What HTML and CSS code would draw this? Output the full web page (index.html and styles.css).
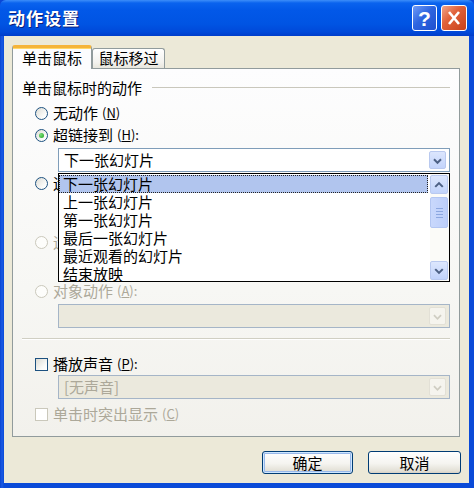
FILE: index.html
```html
<!DOCTYPE html>
<html lang="zh-CN">
<head>
    <meta charset="utf-8">
    <title>动作设置</title>
    <link rel="stylesheet" href="styles.css">
</head>
<body>
<div class="window">
    <div class="titlebar">
        <span class="title">动作设置</span>
        <div class="caption">
            <div class="cap help">?</div>
            <div class="cap close">
                <svg width="24" height="24" viewBox="0 0 24 24"><path d="M7 6 L17 18 M17 6 L7 18" stroke="#fff" stroke-width="2.6" fill="none"/></svg>
            </div>
        </div>
    </div>

    <div class="client">
        <div class="tabs">
            <div class="tab active">单击鼠标</div>
            <div class="tab">鼠标移过</div>
        </div>

        <div class="panel">
            <div class="group">
                <div class="group-head"><span>单击鼠标时的动作</span><i></i></div>

                <div class="opt row1"><span class="radio"></span>无动作<span class="key">(<u>N</u>)</span></div>
                <div class="opt"><span class="radio on"></span>超链接到<span class="key">(<u>H</u>):</span></div>
                <div class="combo">
                    <span class="value">下一张幻灯片</span>
                    <span class="drop"><svg width="17" height="18" viewBox="0 0 17 18"><path d="M4.5 7 L8.5 11 L12.5 7" stroke="#4d6185" stroke-width="2.2" fill="none"/></svg></span>
                </div>
                <!-- these two rows sit under the open list, only a sliver shows -->
                <div class="opt"><span class="radio"></span><span class="under">运行程序 (R):</span></div>
                <div class="field"></div>
                <div class="opt off gap"><span class="radio"></span><span class="under">运行宏 (M):</span></div>
                <div class="combo off small"><span class="value"></span></div>
                <div class="opt off"><span class="radio"></span>对象动作<span class="key">(<u>A</u>):</span></div>
                <div class="combo off">
                    <span class="value"></span>
                    <span class="drop"><svg width="17" height="18" viewBox="0 0 17 18"><path d="M4.5 7 L8.5 11 L12.5 7" stroke="#cfcdc2" stroke-width="2" fill="none"/></svg></span>
                </div>

                <div class="sep"></div>

                <div class="opt check-row"><span class="check"></span>播放声音<span class="key">(<u>P</u>):</span></div>
                <div class="combo off tight">
                    <span class="value">[无声音]</span>
                    <span class="drop"><svg width="17" height="18" viewBox="0 0 17 18"><path d="M4.5 7 L8.5 11 L12.5 7" stroke="#cfcdc2" stroke-width="2" fill="none"/></svg></span>
                </div>
                <div class="opt off last"><span class="check"></span>单击时突出显示<span class="key">(<u>C</u>)</span></div>

                <!-- open dropdown of the hyperlink combo -->
                <div class="droplist">
                    <ul class="items">
                        <li class="sel">下一张幻灯片</li>
                        <li>上一张幻灯片</li>
                        <li>第一张幻灯片</li>
                        <li>最后一张幻灯片</li>
                        <li>最近观看的幻灯片</li>
                        <li>结束放映</li>
                    </ul>
                    <div class="vscroll">
                        <div class="sbtn"><svg width="17" height="18" viewBox="0 0 17 18"><path d="M4.5 11 L8.5 7 L12.5 11" stroke="#4d6185" stroke-width="2.2" fill="none"/></svg></div>
                        <div class="thumb"><span></span><span></span><span></span><span></span></div>
                        <div class="track"></div>
                        <div class="sbtn"><svg width="17" height="18" viewBox="0 0 17 18"><path d="M4.5 7 L8.5 11 L12.5 7" stroke="#4d6185" stroke-width="2.2" fill="none"/></svg></div>
                    </div>
                </div>
            </div>
        </div>

        <div class="actions">
            <button class="btn default">确定</button>
            <button class="btn">取消</button>
        </div>
    </div>
</div>
</body>
</html>
```

FILE: styles.css
```css
* { box-sizing: border-box; }
body { margin: 0; width: 474px; height: 488px; overflow: hidden; background: #0a47d6; font-family: "Noto Sans CJK SC", "Noto Sans", sans-serif; font-size: 15px; color: #000; }

.window { width: 474px; height: 488px; display: flex; flex-direction: column; background: linear-gradient(to right, #0a44d0 0, #1a5ae4 2px, #0a4ad8 4px); border-radius: 6px 6px 0 0; }
.titlebar { height: 36px; display: flex; align-items: center; justify-content: space-between; padding: 0 7px 0 8px; border-radius: 6px 6px 0 0;
    background: linear-gradient(to bottom, #3d8ef9 0, #0a63ee 3px, #0258e8 10px, #0054e3 24px, #0049d9 32px, #003dca 36px); }
.title { color: #fff; font-weight: bold; font-size: 17px; line-height: 20px; text-shadow: 1px 1px 0 #0a1f7a; letter-spacing: 1px; }
.caption { display: flex; gap: 4px; }
.cap { width: 25px; height: 26px; border: 1px solid #fff; border-radius: 3px; display: flex; align-items: center; justify-content: center; color: #fff; }
.help { background: linear-gradient(135deg, #6f9cf8 0, #2e65e0 45%, #1f50cf 100%); font-family: "Liberation Sans", sans-serif; font-weight: bold; font-size: 21px; line-height: 1; }
.close { width: 26px; background: linear-gradient(135deg, #f0a58a 0, #e1623a 40%, #c7401b 100%); }

.client { flex: 1; margin: 0 5px 5px 4px; background: #ece9d8; padding-top: 9px; }

.tabs { display: flex; align-items: flex-end; height: 23px; margin-left: 8px; position: relative; z-index: 2; }
.tab { height: 20px; width: 73px; border: 1px solid #919b9c; border-bottom: none; border-radius: 3px 3px 0 0; font-size: 15px; line-height: 18px; text-align: center;
    background: linear-gradient(#ffffff, #f3f2ee 70%, #e8e6dd); }
.tab.active { height: 24px; width: 80px; margin-bottom: -1px; background: #fcfcfe; border-top: 3px solid #f5b43a; line-height: 20px; box-shadow: inset 0 1px 0 #ffd86a; }

.panel { height: 369px; width: 448px; margin-left: 8px; border: 1px solid #919b9c; background: linear-gradient(#fdfdfe, #f7f7f4 60%, #f2f1ec); }

.group { position: relative; padding: 10px 9px 0 9px; }
.group-head { display: flex; align-items: center; gap: 10px; height: 18px; line-height: 18px; }
.group-head i { flex: 1; border-top: 1px solid #c9c7bc; margin-top: -1px; }

.opt { display: flex; align-items: center; height: 22px; padding-left: 13px; line-height: 18px; white-space: nowrap; }
.opt.row1 { margin-top: 5px; }
.opt.gap { margin-top: 10px; }
.opt.off { color: #aca899; }
.opt.last { margin-top: 4px; }
.key { font-size: 13px; margin-left: 4px; }
.under { display: inline-block; width: 5px; overflow: hidden; }

.radio { width: 13px; height: 13px; border-radius: 50%; border: 1px solid #1c5180; margin-right: 5px; position: relative; flex: none;
    background: linear-gradient(135deg, #dcdcd5, #fbfbf9 70%, #fff); }
.radio.on::after { content: ""; position: absolute; left: 3px; top: 3px; width: 5px; height: 5px; border-radius: 50%; background: radial-gradient(circle at 35% 35%, #7be07a, #21a121); }
.off .radio { border-color: #cac8bb; background: #fdfdfb; }
.check { width: 13px; height: 13px; border: 1px solid #1c5180; margin-right: 5px; flex: none; background: linear-gradient(135deg, #dcdcd5, #fbfbf9 70%, #fff); }
.off .check { border-color: #cac8bb; background: #fff; }

.combo { height: 24px; margin: 2px 0 0 36px; border: 1px solid #7f9db9; background: #fff; display: flex; align-items: center; justify-content: space-between; padding: 2px 3px 2px 5px; line-height: 18px; }
.combo.off { background: #ebe9dd; border-color: #a5b5c7; color: #aca899; }
.combo.small { margin-top: 3px; }
.combo.tight { margin-top: 0; }
.drop { width: 17px; height: 18px; border: 1px solid #b9c9ef; border-radius: 2px; background: linear-gradient(#dce6fd, #c3d4fb); display: flex; }
.combo.off .drop { background: #f5f4ee; border-color: #e2e0d6; }
.field { height: 24px; margin: 3px 0 0 36px; border: 1px solid #7f9db9; background: #fff; }

.sep { margin-top: 10px; border-top: 1px solid #d0cfc3; border-bottom: 1px solid #fff; }
.check-row { margin-top: 13px; }

.droplist { position: absolute; left: 45px; top: 104px; width: 392px; height: 109px; border: 1px solid #000; background: #fff; display: flex; z-index: 3; }
.items { list-style: none; margin: 0; padding: 0; flex: 1; font-size: 15px; }
.items li { height: 18px; line-height: 18px; padding-left: 4px; margin-right: 2px; }
.items li.sel { background: #b1c5ee; outline: 1px dotted #222; outline-offset: -1px; margin-top: 1px; }
.vscroll { width: 19px; display: flex; flex-direction: column; padding: 0 1px 1px 0; background: #fbfbf8; }
.sbtn { height: 19px; margin-top: 1px; border: 1px solid #b9c9ef; border-radius: 2px; background: linear-gradient(#dde7fd, #c1d3fb); display: flex; }
.thumb { height: 31px; margin-top: 3px; border: 1px solid #b3c6f2; border-radius: 2px; background: linear-gradient(to right, #c9d8fc, #bccefa); display: flex; flex-direction: column; align-items: center; justify-content: center; gap: 2px; }
.thumb span { width: 7px; height: 1px; background: #8ca7e0; }
.track { flex: 1; }

.actions { display: flex; justify-content: flex-end; gap: 15px; padding-right: 8px; margin-top: 14px; }
.btn { height: 23px; width: 93px; border: 1px solid #003c74; border-radius: 3px; font-family: inherit; font-size: 15px; line-height: 18px; padding: 0; color: #000;
    background: linear-gradient(#ffffff, #f5f4f0 55%, #e3e0d6 90%, #d6d0c5); }
.btn.default { width: 91px; box-shadow: inset 0 0 0 1px #cee7ff, inset 0 0 0 2px #98b8ea; }
```
